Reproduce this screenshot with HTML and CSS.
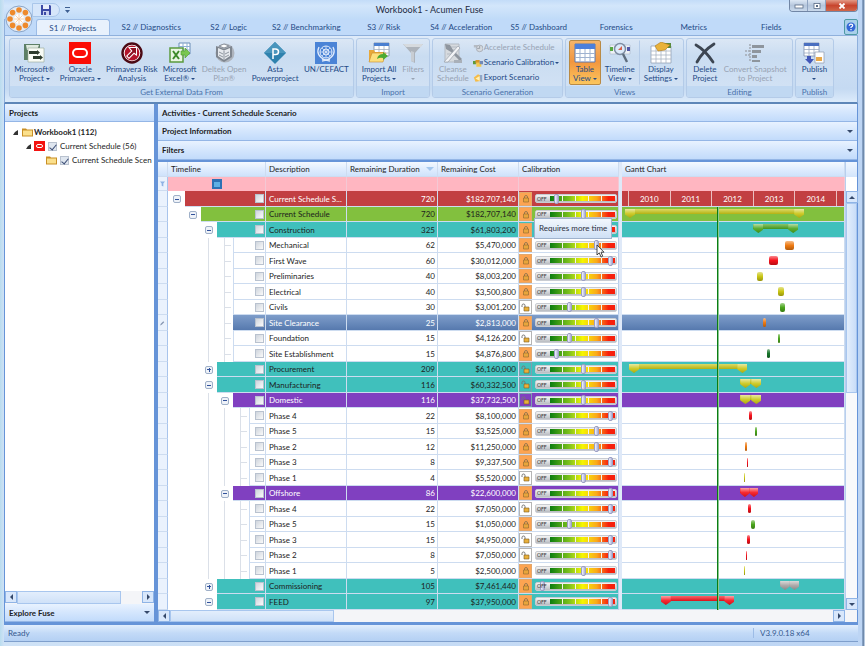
FILE: index.html
```html
<!DOCTYPE html>
<html lang="en">
<head>
    <meta charset="UTF-8">
    <meta name="viewport" content="width=device-width, initial-scale=1.0">
    <title>Workbook1 - Acumen Fuse</title>
    <link rel="stylesheet" href="styles.css">
</head>
<body>
    <header class="titlebar">
        <button class="orb" aria-label="Application menu">
            <svg viewBox="0 0 28 28">
                <circle cx="14" cy="14" r="13" fill="#e4ebf4" stroke="#8aa5c8"/>
                <g fill="#ee8a2c">
                    <circle cx="14" cy="5" r="2.8"/><circle cx="20.4" cy="7.6" r="2.8"/>
                    <circle cx="23" cy="14" r="2.8"/><circle cx="20.4" cy="20.4" r="2.8"/>
                    <circle cx="14" cy="23" r="2.8"/><circle cx="7.6" cy="20.4" r="2.8"/>
                    <circle cx="5" cy="14" r="2.8"/><circle cx="7.6" cy="7.6" r="2.8"/>
                </g>
                <circle cx="14" cy="14" r="5" fill="#fff"/>
                <path d="M14 9v10M9 14h10M10.500 10.500l7 7M17.500 10.500l-7 7" stroke="#f6c79a" stroke-width=".8"/>
            </svg>
        </button>
        <div class="quick">
            <button aria-label="Save">
                <svg viewBox="0 0 10 10"><path d="M0 0h9l1 1v9H0z" fill="#3c4aa5"/><path d="M2 0h6v4H2z" fill="#e9eefb"/><path d="M2 6h6v4H2z" fill="#c8d0ee"/><path d="M3 7h2v3H3z" fill="#3c4aa5"/></svg>
            </button>
        </div>
        <button class="quick-more" aria-label="Customize">
            <svg viewBox="0 0 5 6"><path d="M0 0h5v1H0zM0 3h5L2.500 6z" fill="#3d5f92"/></svg>
        </button>
        <h1>Workbook1 - Acumen Fuse</h1>
        <div class="window-buttons">
            <button aria-label="Minimize"><svg viewBox="0 0 10 6"><rect x="1" y="2" width="8" height="3" fill="#fff" stroke="#5a6c86" stroke-width=".8"/></svg></button>
            <button aria-label="Restore"><svg viewBox="0 0 10 6"><rect x="2" y=".5" width="6" height="5" fill="#fff" stroke="#5a6c86" stroke-width=".8"/><rect x="4" y="2" width="2" height="2" fill="#5a6c86"/></svg></button>
            <button class="close" aria-label="Close"><svg viewBox="0 0 10 6"><path d="M2.500 .5l5 5M7.500 .5l-5 5" stroke="#fff" stroke-width="1.800"/></svg></button>
        </div>
    </header>

    <nav class="tabs">
        <a class="active" href="#">S1 // Projects</a>
        <a href="#">S2 // Diagnostics</a>
        <a href="#">S2 // Logic</a>
        <a href="#">S2 // Benchmarking</a>
        <a href="#">S3 // Risk</a>
        <a href="#">S4 // Acceleration</a>
        <a href="#">S5 // Dashboard</a>
        <a href="#">Forensics</a>
        <a href="#">Metrics</a>
        <a href="#">Fields</a>
        <button class="help" aria-label="Help">
            <svg viewBox="0 0 10 10"><circle cx="5" cy="5" r="4.500" fill="#3467d6"/><path d="M3.300 3.800q0-1.600 1.700-1.600t1.700 1.400q0 1-1.700 1.700v.8M5 7v1.200" fill="none" stroke="#fff" stroke-width="1.200"/></svg>
        </button>
    </nav>

    <div class="ribbon">
        <section class="group">
            <div class="tools">
                <button>
                    <svg viewBox="0 0 22 22"><path d="M1 2h16v16H1z" fill="#5d7f66"/><path d="M3 3h13l-2 5H4z" fill="#dfeadf"/><path d="M5 6h16v14H5z" fill="#f8fbf5" stroke="#93a693" stroke-width=".6"/><path d="M6 9h8v3H6zM10 14h8v3h-8z" fill="#2d3b2d"/><path d="M14 8l3 2.500-3 2.500zM17 13l3 2.500-3 2.500z" fill="#2d3b2d"/></svg>
                    <span>Microsoft®<br>Project <i class="caret"></i></span>
                </button>
                <button>
                    <svg viewBox="0 0 22 22"><path d="M0 0h22v22H0z" fill="#fb0d06"/><rect x="4" y="7" width="14" height="8" rx="4" fill="none" stroke="#fff" stroke-width="2"/></svg>
                    <span>Oracle<br>Primavera <i class="caret"></i></span>
                </button>
                <button>
                    <svg viewBox="0 0 22 22"><circle cx="11" cy="11" r="9.500" fill="#fff" stroke="#4c0a14" stroke-width="2.400"/><circle cx="11" cy="11" r="7.400" fill="#b3142a"/><path d="M7 5h9v9l-3-2-5 5-3-3 5-5z" fill="#fff"/><path d="M9 6h6v6l-2-1.500-5 5-1.500-1.500 5-5z" fill="#8d0f20"/></svg>
                    <span>Primavera Risk<br>Analysis</span>
                </button>
                <button>
                    <svg viewBox="0 0 22 22"><path d="M10 1h11v11H10z" fill="#fff" stroke="#6b8eb8"/><path d="M10 4.500h11M10 8h11M14 1v11M18 1v11" stroke="#8fb0d4"/><path d="M1 6h13v14H1z" fill="#eaf6e3" stroke="#5b9b3e" stroke-width="1.500"/><path d="M4 9l6 8M10 9l-6 8" stroke="#3e8a28" stroke-width="2"/><path d="M12 9h4V6l5 5-5 5v-3h-4z" fill="#79c650" stroke="#4b9a2d" stroke-width=".6"/></svg>
                    <span>Microsoft<br>Excel® <i class="caret"></i></span>
                </button>
                <button disabled>
                    <svg viewBox="0 0 22 22"><circle cx="12" cy="11" r="9.500" fill="#aeb4bd"/><path d="M3 4l8 3 8-3v11l-8 5-8-5z" fill="#7f868f"/><path d="M5 6l6 2.500L17 6v8l-6 4-6-4z" fill="#e6e9ed"/><path d="M6 4l5-2 5 2-5 2zM11 9v9" fill="#fff" stroke="#8b929c"/><path d="M6 10l4 2M12 12l4-2M6 13l4 2M12 15l4-2" stroke="#9097a0"/></svg>
                    <span>Deltek Open<br>Plan®</span>
                </button>
                <button>
                    <svg viewBox="0 0 22 22"><path d="M11 0l11 11-11 11L0 11z" fill="#2f82ae"/><path d="M11 0l11 11H0z" fill="#4a96bd"/><path d="M9 17V7h2.500q3 0 3 2.800t-3 2.800H9" fill="none" stroke="#fff" stroke-width="1.500"/></svg>
                    <span>Asta<br>Powerproject</span>
                </button>
                <button>
                    <svg viewBox="0 0 22 22"><path d="M0 0h22v22H0z" fill="#4a83d6"/><g fill="none" stroke="#dfeafb"><circle cx="11" cy="10" r="6"/><circle cx="11" cy="10" r="3"/><path d="M11 4v12M5 10h12M7 6l8 8M15 6l-8 8" stroke-width=".7"/><path d="M4 5q-4 8 6 13M18 5q4 8-6 13M7 19l8-2M15 19l-8-2" stroke-width="1.300"/></g></svg>
                    <span>UN/CEFACT</span>
                </button>
            </div>
            <h2>Get External Data From</h2>
        </section>

        <section class="group">
            <div class="tools">
                <button>
                    <svg viewBox="0 0 22 22"><path d="M6 1h15v13H6z" fill="#fff" stroke="#6d7f99" stroke-width=".7"/><path d="M6 1h15v3H6z" fill="#4a7fd0"/><path d="M6 7.500h15M6 11h15M11 4v10M16 4v10" stroke="#a3aebe" stroke-width=".8"/><path d="M1 8h5l1 2h9l-2 10H1z" fill="#e8a83a"/><path d="M4 11h14l-3 9H1z" fill="#fddf7c" stroke="#c88b2a" stroke-width=".6"/><path d="M9 17q1-5 6-5v-2l5 4-5 4v-2q-3-1-6 1z" fill="#4caa32"/></svg>
                    <span>Import All<br>Projects <i class="caret"></i></span>
                </button>
                <button disabled>
                    <svg viewBox="0 0 22 22"><path d="M1 2h20l-8 9v10l-4-2v-8z" fill="#adb3bb"/><path d="M1 2h20l-2 3H4z" fill="#d6dade"/><path d="M9 9l3 1v10l-3-1z" fill="#c8cdd3"/></svg>
                    <span>Filters<br><i class="caret"></i></span>
                </button>
            </div>
            <h2>Import</h2>
        </section>

        <section class="group">
            <div class="tools">
                <button disabled>
                    <svg viewBox="0 0 22 22"><path d="M3 2h14v18H3z" fill="#d6dade" stroke="#b3bac3"/><path d="M9 5h6M9 8h6M5 12h4" stroke="#b4bac3"/><path d="M3 2l5 1 3 5 9 9-2 2-9-9-5-3z" fill="#8f969f"/><path d="M2 20L16 4l2 2L6 20z" fill="#f3f4f6" stroke="#9aa1aa" stroke-width=".7"/><path d="M12 18h8v3h-8z" fill="#a9b0b9"/></svg>
                    <span>Cleanse<br>Schedule</span>
                </button>
                <div class="stack">
                    <button disabled>
                        <svg viewBox="0 0 12 11"><path d="M1 2h7v3H1z" fill="#b5bbc3"/><circle cx="8" cy="6" r="4" fill="#d5d9de" stroke="#a3aab3"/><path d="M8 3v3H5" stroke="#8f969f" fill="none"/></svg>
                        Accelerate Schedule
                    </button>
                    <button>
                        <svg viewBox="0 0 12 11"><path d="M0 3h4v4H0z" fill="#5b9b3e"/><path d="M3 2h5v4H3z" fill="#d9952b"/><path d="M4 5h6v5H4z" fill="#f3c850"/><path d="M8 3h4v4H8z" fill="#7189b8"/></svg>
                        Scenario Calibration<i class="caret"></i>
                    </button>
                    <button>
                        <svg viewBox="0 0 12 11"><path d="M1 5l5-4 4 2-1 6-6 1z" fill="#f5bc48"/><path d="M3 6l5-3v6z" fill="#fff0b8"/><path d="M8 2h3v8H9z" fill="#8fa6c8"/></svg>
                        Export Scenario
                    </button>
                </div>
            </div>
            <h2>Scenario Generation</h2>
        </section>

        <section class="group">
            <div class="tools">
                <button class="pressed">
                    <svg viewBox="0 0 22 22"><path d="M1 2h20v18H1z" fill="#fff" stroke="#5a78b0"/><path d="M1 2h20v5H1z" fill="#4d80dc"/><path d="M1 11.500h20M1 15.500h20M6 7v13M11 7v13M16 7v13" stroke="#9fb2d0"/></svg>
                    <span>Table<br>View <i class="caret"></i></span>
                </button>
                <button>
                    <svg viewBox="0 0 22 22"><path d="M1 3h20v9H1z" fill="#eef2f7" stroke="#a9b4c4" stroke-width=".6"/><path d="M1 5h3v4H1z" fill="#58a842"/><path d="M18 5h3v4h-3z" fill="#5158a8"/><circle cx="11" cy="7" r="5.500" fill="#dceafa" stroke="#7e8ea3" stroke-width="1.500"/><path d="M9 8h4V4z" fill="#d4614c"/><path d="M14 12l4 8" stroke="#5f6c7d" stroke-width="2.400"/></svg>
                    <span>Timeline<br>View <i class="caret"></i></span>
                </button>
                <button class="divided">
                    <svg viewBox="0 0 22 22"><path d="M1 4h20v17H1z" fill="#fff" stroke="#8b99ad" stroke-width=".7"/><path d="M1 9h20M1 13h20M1 17h20M6 4v17M11 4v17M16 4v17" stroke="#aab4c3" stroke-width=".8"/><path d="M12 1h9v5h-9z" fill="#5a8a3c"/><path d="M5 4l6-4 9 3-5 5-7 1z" fill="#e9b23a" stroke="#b07a1c" stroke-width=".6"/></svg>
                    <span>Display<br>Settings <i class="caret"></i></span>
                </button>
            </div>
            <h2>Views</h2>
        </section>

        <section class="group">
            <div class="tools">
                <button>
                    <svg viewBox="0 0 22 22"><path d="M2 3q9 5 17 17M20 2Q9 9 3 20" fill="none" stroke="#3d4652" stroke-width="2.800" stroke-linecap="round"/></svg>
                    <span>Delete<br>Project</span>
                </button>
                <button disabled>
                    <svg viewBox="0 0 22 22"><path d="M8 3h12v3H8zM8 8h9v3H8zM8 13h5v3H8zM8 18h8v2H8z" fill="#8e959d"/><path d="M1 9h6M1 13h6M6 2v18" stroke="#a2a9b2" stroke-width="1.500" stroke-dasharray="2 1"/></svg>
                    <span>Convert Snapshot<br>to Project</span>
                </button>
            </div>
            <h2>Editing</h2>
        </section>

        <section class="group">
            <div class="tools">
                <button>
                    <svg viewBox="0 0 22 22"><path d="M1 1h15v13H1z" fill="#fff" stroke="#7385a5" stroke-width=".7"/><path d="M1 1h15v3H1z" fill="#4a6fc0"/><path d="M1 7.500h15M1 11h15M6 4v10M11 4v10" stroke="#9aa8c0" stroke-width=".8"/><path d="M12 10h9v11h-9z" fill="#fff" stroke="#8c99ad" stroke-width=".7"/><path d="M13 15h6v4h-6z" fill="#e8a94a"/><path d="M4 14h4v3h3l-4 5-5-5h2z" fill="#4257b8"/></svg>
                    <span>Publish<br><i class="caret"></i></span>
                </button>
            </div>
            <h2>Publish</h2>
        </section>
    </div>

    <main>
        <aside class="panel">
            <h3 class="bar">Projects</h3>
            <ul class="projects">
                <li>
                    <i class="arrow"></i>
                    <svg viewBox="0 0 11 9"><path d="M0 1h4l1 1h6v7H0z" fill="#c98f25"/><path d="M1 3h9v5H1z" fill="#fbe08c"/></svg>
                    <b>Workbook1 (112)</b>
                </li>
                <li class="child">
                    <i class="arrow"></i>
                    <svg viewBox="0 0 11 10"><path d="M0 0h11v10H0z" fill="#f31310"/><rect x="2.500" y="3.500" width="6" height="3" rx="1.500" fill="none" stroke="#fff"/></svg>
                    <label><input type="checkbox" checked> Current Schedule (56)</label>
                </li>
                <li class="grandchild">
                    <svg viewBox="0 0 11 9"><path d="M0 1h4l1 1h6v7H0z" fill="#c98f25"/><path d="M1 3h9v5H1z" fill="#fbe08c"/></svg>
                    <label><input type="checkbox" checked> Current Schedule Scen</label>
                </li>
            </ul>
            <div class="scroll-x">
                <button aria-label="Scroll left"><i class="left"></i></button>
                <div class="thumb wide"></div>
                <button aria-label="Scroll right"><i class="right"></i></button>
            </div>
            <h3 class="bar">Explore Fuse <i class="down"></i></h3>
        </aside>

        <section class="panel">
            <h3 class="bar">Activities - Current Schedule Scenario</h3>
            <h3 class="bar fold">Project Information <i class="down"></i></h3>
            <h3 class="bar fold">Filters <i class="down"></i></h3>
            <div class="sheet">
                <table>
                    <colgroup>
                        <col class="col-mark"><col class="col-tree"><col class="col-name"><col class="col-duration">
                        <col class="col-cost"><col class="col-lock"><col class="col-slider"><col class="col-split"><col>
                    </colgroup>
                    <thead>
                        <tr class="titles">
                            <th></th>
                            <th>Timeline</th>
                            <th>Description</th>
                            <th>Remaining Duration <i class="sort"></i></th>
                            <th>Remaining Cost</th>
                            <th colspan="2">Calibration</th>
                            <th class="split"></th>
                            <th>Gantt Chart</th>
                        </tr>
                        <tr class="filter">
                            <td class="mark"><svg viewBox="0 0 6 6"><path d="M0 0h6L4 2.500V6L2 5V2.500z" fill="#8fb2e4"/></svg></td>
                            <td><button class="filter-box" aria-label="Filter timeline"></button></td>
                            <td></td>
                            <td></td>
                            <td></td>
                            <td colspan="2"></td>
                            <td class="split"></td>
                            <td></td>
                        </tr>
                    </thead>
                    <tbody id="activities"></tbody>
                </table>
                <div class="scroll-y">
                    <div class="cap"></div>
                    <div class="blank"></div>
                    <button aria-label="Scroll up"><i class="up"></i></button>
                    <div class="thumb"></div>
                    <button class="end" aria-label="Scroll down"><i class="down"></i></button>
                </div>
            </div>
            <div class="scroll-x main-scroll">
                <button aria-label="Scroll left"><i class="left"></i></button>
                <div class="thumb"></div>
                <button aria-label="Scroll right"><i class="right"></i></button>
            </div>
        </section>
    </main>

    <footer>
        <span>Ready</span>
        <span class="version">V3.9.0.18 x64</span>
    </footer>

    <script src="script.js"></script>
</body>
</html>
```
FILE: styles.css
```css
* {
    box-sizing: border-box;
}
body {
    margin: 0;
    padding: 0 7px 4px 4px;
    min-height: 100vh;
    display: flex;
    flex-direction: column;
    font-family: Lato, "Open Sans", sans-serif;
    font-size: 8px;
    line-height: 10px;
    color: #1d1d1d;
    background: linear-gradient(90deg, #b9dcee, #cfe2f6 4px, #bdd5f4 calc(100% - 3px), #4b6a92 calc(100% - 2px), #dceafa 100%);
}
button {
    font: inherit;
    color: inherit;
    padding: 0;
    border: 0;
    background: none;
}
h1, h2, h3, ul {
    margin: 0;
    padding: 0;
    font-size: 8px;
    font-weight: normal;
}
svg {
    display: block;
    flex: none;
}

/* title bar */
.titlebar {
    position: relative;
    display: flex;
    align-items: center;
    height: 19px;
    background: linear-gradient(#c3dcf8, #d3e6fb 30%, #c0dbf8);
}
.orb {
    position: absolute;
    left: 1px;
    top: 5px;
    width: 28px;
    height: 28px;
    z-index: 2;
}
.quick {
    margin-left: 28px;
    padding: 0 8px;
    height: 14px;
    display: flex;
    align-items: center;
    border: 1px solid #a9c6ea;
    border-radius: 0 8px 8px 0;
    background: #d6e6fa;
}
.quick svg {
    width: 10px;
    height: 10px;
}
.quick-more {
    margin-left: 5px;
}
.quick-more svg {
    width: 5px;
    height: 6px;
}
h1 {
    flex: 1;
    text-align: center;
    font-size: 9px;
    color: #1e2c44;
}
.window-buttons {
    display: flex;
    align-self: flex-start;
    height: 12px;
    border: 1px solid #7186a5;
    border-top: 0;
    border-radius: 0 0 4px 4px;
    overflow: hidden;
}
.window-buttons button {
    width: 18px;
    display: flex;
    align-items: center;
    justify-content: center;
    border-right: 1px solid #8ea3c1;
    background: linear-gradient(#dde8f5, #b5c6dc 50%, #c9d9ec);
}
.window-buttons .close {
    width: 31px;
    border-right: 0;
    background: linear-gradient(#e39a86, #c8452e 50%, #d1674a);
}
.window-buttons svg {
    width: 10px;
    height: 6px;
}

/* tabs */
.tabs {
    display: flex;
    align-items: stretch;
    height: 16px;
    padding-left: 28px;
    border-left: 1px solid #8fb0dc;
    background: #c0daf9;
}
.tabs a {
    flex: 1;
    display: flex;
    align-items: center;
    justify-content: center;
    margin: 0 3px;
    color: #244a86;
    text-decoration: none;
    white-space: nowrap;
}
.tabs a.active {
    border: 1px solid #9cbce6;
    border-bottom: 0;
    border-radius: 3px 3px 0 0;
    background: #e8f1fc;
}
.help {
    width: 14px;
    margin-left: 34px;
    padding: 1px;
    border: 1px solid #4f9aa6;
    border-radius: 2px;
    background: #a9d0ea;
}
.help svg {
    width: 10px;
    height: 10px;
}

/* ribbon */
.ribbon {
    display: grid;
    grid-template-columns: 345px 74px 131px 119px 107px 39px;
    gap: 2px;
    height: 69px;
    padding: 2px 4px 4px;
    border: 1px solid #8fb0dc;
    border-bottom: 2px solid #5d86b8;
    background: linear-gradient(#dfebf9, #cddff4 25%, #c5daf2 80%, #dcebfb);
}
.group {
    display: flex;
    flex-direction: column;
    border: 1px solid #b4cbe8;
    border-radius: 3px;
    overflow: hidden;
    background: linear-gradient(#dbe7f5, #c9dcf1 30%, #d4e3f5);
}
.group h2 {
    line-height: 12px;
    text-align: center;
    color: #4a72ab;
    background: #c0d8f2;
}
.tools {
    flex: 1;
    display: flex;
    justify-content: space-evenly;
    padding: 1px;
}
.tools button {
    display: flex;
    flex-direction: column;
    align-items: center;
    gap: 1px;
    padding: 1px;
    line-height: 9px;
    color: #244a86;
    border: 1px solid transparent;
    white-space: nowrap;
}
.tools button:disabled {
    color: #98a3b3;
}
.tools svg {
    width: 22px;
    height: 22px;
}
.tools .pressed {
    padding: 1px 3px;
    border-color: #b98a45;
    border-radius: 2px;
    background: linear-gradient(#f6b56a, #f2963f 48%, #fbc65e);
}
.tools .divided {
    padding-left: 4px;
    border-left-color: #b4cbe8;
}
.caret {
    display: inline-block;
    vertical-align: middle;
    border: 2px solid transparent;
    border-top-color: currentColor;
    border-bottom: 0;
}
.stack {
    display: flex;
    flex-direction: column;
    align-items: flex-start;
    justify-content: space-around;
}
.tools .stack button {
    flex-direction: row;
    padding: 0;
}
.tools .stack svg {
    width: 10px;
    height: 10px;
}

/* panels */
main {
    flex: 1;
    display: grid;
    grid-template-columns: 149px minmax(0, 1fr);
    gap: 4px;
    padding: 0 1px 3px;
    background: #6694d8;
}
.panel {
    display: flex;
    flex-direction: column;
    min-width: 0;
    background: #fff;
}
.bar {
    display: flex;
    align-items: center;
    justify-content: space-between;
    height: 18px;
    padding: 0 4px;
    font-weight: bold;
    border-bottom: 1px solid #94b6e6;
    background: linear-gradient(#e8f2ff, #d4e6fd 50%, #c2dbfb);
}
.fold {
    height: 19px;
}
.up, .down, .left, .right {
    border: 3px solid transparent;
}
.down {
    border-top-color: #35496b;
    border-bottom: 0;
}
.up {
    border-bottom-color: #35496b;
    border-top: 0;
}
.left {
    border-right-color: #35496b;
    border-left: 0;
}
.right {
    border-left-color: #35496b;
    border-right: 0;
}
.projects {
    flex: 1;
    padding-top: 3px;
    overflow: hidden;
    list-style: none;
}
.projects li {
    display: flex;
    align-items: center;
    gap: 3px;
    height: 14px;
    padding-left: 8px;
    white-space: nowrap;
}
.projects .child {
    padding-left: 21px;
}
.projects .grandchild {
    padding-left: 41px;
}
.projects svg {
    width: 11px;
    height: 10px;
}
.projects li:first-child {
    gap: 1px;
}
.projects li:first-child svg {
    margin-left: 3px;
}
.projects label {
    display: flex;
    align-items: center;
    gap: 3px;
}
.arrow {
    border: 3px solid transparent;
    border-right-color: #333;
    border-bottom-color: #333;
    border-left-width: 2px;
    border-top-width: 2px;
}
input[type="checkbox"] {
    appearance: none;
    flex: none;
    display: flex;
    justify-content: center;
    width: 9px;
    height: 9px;
    margin: 0;
    border: 1px solid #b9c2cf;
    background: linear-gradient(135deg, #cfd5dd, #fafafa);
}
input[type="checkbox"]:checked {
    background: #dfe6ef;
}
input[type="checkbox"]:checked::before {
    content: "";
    width: 3px;
    height: 6px;
    border: solid #3a4c74;
    border-width: 0 1px 1px 0;
    transform: rotate(40deg);
}

/* scroll bars */
.scroll-x {
    display: flex;
    height: 13px;
    background: #f4f5f8;
}
.scroll-x button, .scroll-y button {
    flex: none;
    display: flex;
    align-items: center;
    justify-content: center;
    width: 12px;
    height: 12px;
    border: 1px solid #8fb4e6;
    background: #d8e7fb;
}
.scroll-x .thumb {
    width: 164px;
    border: 1px solid #a8c6ee;
    background: linear-gradient(#e3eefc, #cfe1f8);
}
.scroll-x .wide {
    width: 70%;
}
.scroll-x button:last-child {
    margin-left: auto;
}
.main-scroll {
    height: 12px;
    padding-right: 12px;
}
.scroll-y {
    display: flex;
    flex-direction: column;
    border-left: 1px solid #b8cfee;
    background: #f8f9fb;
}
.scroll-y .cap {
    height: 15px;
    background: linear-gradient(#f1f7ff, #d3e5fc);
}
.scroll-y .blank {
    height: 14px;
    background: #fff;
}
.scroll-y .thumb {
    height: 190px;
    border: 1px solid #a8c6ee;
    background: linear-gradient(90deg, #e3eefc, #c9ddf8);
}
.scroll-y .end {
    margin-top: auto;
}

/* activity sheet */
.sheet {
    flex: 1;
    display: grid;
    grid-template-columns: minmax(0, 1fr) 12px;
    border-top: 2px solid #6694d8;
}
table {
    width: 100%;
    table-layout: fixed;
    border-collapse: separate;
    border-spacing: 0;
    align-self: start;
}
.col-mark { width: 10px; }
.col-tree { width: 98px; }
.col-name { width: 81px; }
.col-duration { width: 91px; }
.col-cost { width: 81px; }
.col-lock { width: 15px; }
.col-slider { width: 85px; }
.col-split { width: 3px; }
th, td {
    height: 15px;
    padding: 0 3px;
    line-height: 10px;
    white-space: nowrap;
    border-right: 1px solid #cddcf0;
    border-bottom: 1px solid #cddcf0;
}
th {
    text-align: left;
    font-weight: normal;
    background: linear-gradient(#f4f9ff, #e0edfe 50%, #cfe2fb);
}
.filter td {
    height: 14px;
    padding: 0;
    background: #ffb6c1;
    border-bottom: 0;
    border-right-color: #f4c8d4;
}
.sort {
    float: right;
    margin-top: 3px;
    border: 4px solid transparent;
    border-top-color: #a5c8ee;
    border-bottom: 0;
}
.filter-box {
    display: block;
    width: 10px;
    height: 10px;
    margin: 0 auto;
    border: 2px solid #2c71b4;
    border-top-width: 3px;
    background: #5eb0e4;
}
tbody tr:nth-child(odd) td {
    height: 16px;
}
td.mark, .filter td.mark {
    padding: 0 2px;
    background: #eaf2fd;
    border-right: 1px solid #a8c4ec;
    border-bottom: 1px solid #cddcf0;
}
.mark svg {
    width: 5px;
    height: 6px;
}
td.number {
    text-align: right;
    padding-right: 2px;
}
td.tree {
    padding: 0 0 0 1px;
    border-bottom: 0;
}
.tree-row {
    display: flex;
    height: 100%;
}
.node {
    flex: none;
    display: flex;
    align-items: center;
    justify-content: center;
    width: 16px;
}
.guide, .branch {
    background: linear-gradient(#dbe0e8, #dbe0e8) 7px 0 / 1px 100% no-repeat;
}
.branch {
    background: linear-gradient(#dbe0e8, #dbe0e8) 7px 0 / 1px 100% no-repeat, linear-gradient(#dbe0e8, #dbe0e8) 7px 50% / 7px 1px no-repeat;
}
.toggle {
    display: block;
    width: 8px;
    height: 8px;
    border: 1px solid #9fb0c8;
    border-radius: 2px;
    background: linear-gradient(#31519b, #31519b) 1px 50% / 4px 1px no-repeat, #eef2f8;
}
.toggle.plus {
    background: linear-gradient(#31519b, #31519b) 1px 50% / 4px 1px no-repeat, linear-gradient(#31519b, #31519b) 50% 1px / 1px 4px no-repeat, #eef2f8;
}
.fill {
    flex: 1;
    display: flex;
    align-items: center;
    justify-content: flex-end;
    padding-right: 1px;
    border-bottom: 1px solid #cddcf0;
    border-left: 1px solid #cddcf0;
}
.red td, .red .fill {
    color: #fff;
    background: #c23f42;
}
.green td, .green .fill {
    background: #82c03e;
}
.teal td, .teal .fill {
    background: #40c0bc;
}
.purple td, .purple .fill {
    color: #fff;
    background: #8040c0;
}
.selected td, .selected .fill {
    color: #fff;
    background: linear-gradient(#7e9dca, #5679ae);
}
tbody td.tree {
    background: #fff;
}
.red .fill, .green .fill, .teal .fill, .purple .fill, .selected .fill {
    border-left: 0;
}
tbody tr .mark {
    background: #eaf2fd;
}
.split, tbody td.split, .filter .split {
    padding: 0;
    border: 0;
    background: #dfe9f8;
}
td.lock {
    padding: 0;
    border-right: 0;
}
.lock button {
    display: flex;
    align-items: center;
    justify-content: center;
    width: 13px;
    height: 14px;
    border: 1px solid #e3a76c;
    background: #fda451;
}
.lock .open {
    border-color: #b5b5b5;
    background: #fff;
}
.teal .lock .open, .purple .lock .open {
    background: none;
    border-color: #7d9fb0;
}
.lock svg {
    width: 9px;
    height: 9px;
}
td.calibration {
    position: relative;
    padding: 0 1px;
    border-right: 1px solid #b9cdea;
}
.calibration .off {
    position: absolute;
    left: 3px;
    top: 50%;
    margin-top: -3px;
    font-size: 5px;
    line-height: 6px;
    color: #333;
    pointer-events: none;
}
input[type="range"] {
    appearance: none;
    display: block;
    width: 100%;
    height: 9px;
    margin: 0;
    padding: 0 3px 0 4px;
    border: 1px solid #c9ccd2;
    border-radius: 2px;
    background:
        repeating-linear-gradient(90deg, transparent 0 12px, #f6f6e8 12px 13px) 14px 50% / 64px 5px no-repeat,
        linear-gradient(90deg, #0b7d10, #7fc31c 30%, #f6f600 50%, #fba81a 72%, #f7200c 90%) 14px 50% / 65px 5px no-repeat,
        linear-gradient(#f4f4f4, #b9bcc2);
}
input[type="range"]::-webkit-slider-thumb {
    appearance: none;
    width: 5px;
    height: 10px;
    border: 1px solid #9a9fc4;
    border-radius: 2px;
    background: linear-gradient(90deg, #f4f4ff, #a9add2);
}
.tip {
    position: absolute;
    left: 0;
    top: -20px;
    z-index: 3;
    padding: 4px 4px 5px;
    border: 1px solid #9fb2cc;
    color: #2c2f3c;
    background: linear-gradient(#f2f7fd, #cfe0f5);
}
.cursor {
    position: absolute;
    left: 62px;
    top: 6px;
    z-index: 4;
    width: 9px;
    height: 14px;
}

/* gantt column, the green rule marks the status date */
td.gantt {
    position: relative;
    padding: 0;
}
td.gantt::after {
    content: "";
    position: absolute;
    left: 43%;
    top: 0;
    bottom: -1px;
    width: 2px;
    background: linear-gradient(90deg, #0a7d14 50%, #8cc890 50%);
}
.red td.gantt::after {
    display: none;
}
.years {
    display: grid;
    grid-template-columns: 7fr 42fr 42fr 42fr 42fr 42fr 7fr;
    height: 100%;
}
.years span {
    display: flex;
    align-items: center;
    justify-content: center;
    border-right: 1px solid #e9c0c1;
}
.years span:last-child {
    border: 0;
}
.task {
    position: absolute;
    top: 3px;
    height: 9px;
    border-radius: 2px;
    background: linear-gradient(rgba(255, 255, 255, .5), rgba(255, 255, 255, 0) 50%, rgba(0, 0, 0, .25));
    background-color: var(--bar);
}
.summary {
    position: absolute;
    top: 2px;
    height: 5px;
    display: flex;
    justify-content: space-between;
    background: linear-gradient(rgba(255, 255, 255, .35), rgba(0, 0, 0, .1));
    background-color: var(--bar);
}
.summary i {
    width: 10px;
    height: 9px;
    background: linear-gradient(rgba(255, 255, 255, .6), rgba(255, 255, 255, .1) 50%, rgba(0, 0, 0, .15));
    background-color: var(--bar);
    clip-path: polygon(0 0, 100% 0, 100% 60%, 50% 100%, 0 60%);
}
.bar-yellow { --bar: #c9c614; }
.bar-green { --bar: #4aa51c; }
.bar-dark { --bar: #17752a; }
.bar-orange { --bar: #ee7a12; }
.bar-red { --bar: #f5121c; }
.bar-gray { --bar: #a3a0a0; }

/* status bar */
footer {
    display: flex;
    align-items: center;
    justify-content: space-between;
    height: 17px;
    padding: 0 4px;
    color: #35598f;
    border-bottom: 1px solid #7f9fcc;
    background: linear-gradient(#e2eefd, #c3daf7 50%, #b4d0f3);
}
.version {
    width: 101px;
    padding-left: 6px;
    border-left: 1px solid #9dbce6;
}
```
FILE: script.js
```js
// Width of the gantt scale, task positions below are on the same scale
const SCALE = 223;

// level, name, duration, cost, locked, calibration, row colour, toggle, bar colour, bar start, bar end
const activities = [
    [1, "Current Schedule S...", 720, "$182,707,140", 1, 1, "red", "-"],
    [2, "Current Schedule", 720, "$182,707,140", 1, 3, "green", "-", "yellow", 3, 183],
    [3, "Construction", 325, "$61,803,200", 1, 3, "teal", "-", "green", 132, 177],
    [4, "Mechanical", 62, "$5,470,000", 1, 4, "", "", "orange", 164, 173],
    [4, "First Wave", 60, "$30,012,000", 1, 5, "", "", "red", 148, 157],
    [4, "Preliminaries", 40, "$8,003,200", 1, 3, "", "", "yellow", 136, 142],
    [4, "Electrical", 40, "$3,500,800", 1, 3, "", "", "yellow", 157, 163],
    [4, "Civils", 30, "$3,001,200", 0, 2, "", "", "green", 159, 164],
    [4, "Site Clearance", 25, "$2,813,000", 1, 4, "selected", "", "orange", 142, 145],
    [4, "Foundation", 15, "$4,126,200", 0, 2, "", "", "green", 157, 159],
    [4, "Site Establishment", 15, "$4,876,800", 1, 1, "", "", "dark", 146, 149],
    [3, "Procurement", 209, "$6,160,000", 0, 3, "teal", "+", "yellow", 7, 126],
    [3, "Manufacturing", 116, "$60,332,500", 0, 3, "teal", "-", "yellow", 119, 140],
    [4, "Domestic", 116, "$37,732,500", 0, 3, "purple", "-", "yellow", 119, 140],
    [5, "Phase 4", 22, "$8,100,000", 1, 5, "", "", "red", 128, 131],
    [5, "Phase 5", 15, "$3,525,000", 1, 4, "", "", "green", 134, 136],
    [5, "Phase 2", 12, "$11,250,000", 1, 4, "", "", "orange", 124, 126],
    [5, "Phase 3", 8, "$9,337,500", 1, 5, "", "", "red", 126, 127],
    [5, "Phase 1", 4, "$5,520,000", 0, 3, "", "", "yellow", 123, 124],
    [4, "Offshore", 86, "$22,600,000", 1, 5, "purple", "-", "red", 119, 137],
    [5, "Phase 4", 22, "$7,050,000", 0, 5, "", "", "red", 127, 130],
    [5, "Phase 5", 15, "$1,050,000", 1, 2, "", "", "green", 130, 134],
    [5, "Phase 3", 15, "$4,950,000", 0, 5, "", "", "red", 126, 129],
    [5, "Phase 2", 8, "$7,050,000", 0, 5, "", "", "red", 125, 126],
    [5, "Phase 1", 5, "$2,500,000", 1, 3, "", "", "yellow", 123, 124],
    [3, "Commissioning", 105, "$7,461,440", 1, 0, "teal", "+", "gray", 159, 178],
    [3, "FEED", 97, "$37,950,000", 1, 5, "teal", "-", "red", 39, 113]
];

const lockIcon = '<svg viewBox="0 0 9 9"><path d="M3.500 4V3q0-1.500 1.500-1.500T6.500 3v1" fill="none" stroke="#9a7a4c"/><path d="M2.500 4h5v4h-5z" fill="#e8a53c" stroke="#8a6430" stroke-width=".6"/></svg>';
const openIcon = '<svg viewBox="0 0 9 9"><path d="M1 4V2.500q0-1.500 1.500-1.500T4 2.500V4" fill="none" stroke="#777"/><path d="M3 4h5v4H3z" fill="#e8b03c" stroke="#7d5c20" stroke-width=".6"/></svg>';
const pencil = '<svg viewBox="0 0 6 6"><path d="M0 6l1-2 3-3 1 1-3 3z" fill="#8595b0"/></svg>';
const cursor = '<svg class="cursor" viewBox="0 0 9 14"><path d="M1 1v10l2.300-2.200L5 13l1.700-.8L5 8.200h3z" fill="#fff" stroke="#333" stroke-width=".9"/></svg>';

function treeCell(level, name, toggle) {
    let nodes = "";
    for (let i = 1; i <= level; i++) {
        if (i === level && toggle) {
            nodes += `<span class="node"><button class="toggle ${toggle === "+" ? "plus" : ""}" aria-label="Toggle ${name}"></button></span>`;
        } else if (i === level) {
            nodes += '<span class="node branch"></span>';
        } else {
            nodes += `<span class="node ${i > 2 ? "guide" : ""}"></span>`;
        }
    }
    return `<td class="tree"><div class="tree-row">${nodes}<div class="fill"><input type="checkbox" aria-label="Select ${name}"></div></div></td>`;
}

function ganttCell(toggle, color, start, end) {
    if (!color) {
        return '<td class="gantt"><div class="years"><span></span><span>2010</span><span>2011</span><span>2012</span><span>2013</span><span>2014</span><span></span></div></td>';
    }
    const left = (start / SCALE * 100).toFixed(2);
    const width = ((end - start) / SCALE * 100).toFixed(2);
    const shape = toggle ? "summary" : "task";
    const ends = toggle ? "<i></i><i></i>" : "";
    return `<td class="gantt"><div class="${shape} bar-${color}" style="left: ${left}%; width: ${width}%">${ends}</div></td>`;
}

document.getElementById("activities").innerHTML = activities.map(function (row) {
    const [level, name, duration, cost, locked, value, rowClass, toggle, color, start, end] = row;
    const hover = name === "Mechanical" ? `<div class="tip" role="tooltip">Requires more time</div>${cursor}` : "";
    const off = name === "Construction" ? "" : '<span class="off">OFF</span>';
    return `<tr class="${rowClass}">
        <td class="mark">${rowClass === "selected" ? pencil : ""}</td>
        ${treeCell(level, name, toggle)}
        <td>${name}</td>
        <td class="number">${duration}</td>
        <td class="number">${cost}</td>
        <td class="lock"><button class="${locked ? "" : "open"}" aria-label="Lock ${name}">${locked ? lockIcon : openIcon}</button></td>
        <td class="calibration"><input type="range" min="0" max="5" value="${value}" aria-label="Calibration ${name}">${off}${hover}</td>
        <td class="split"></td>
        ${ganttCell(toggle, color, start, end)}
    </tr>`;
}).join("");
```
